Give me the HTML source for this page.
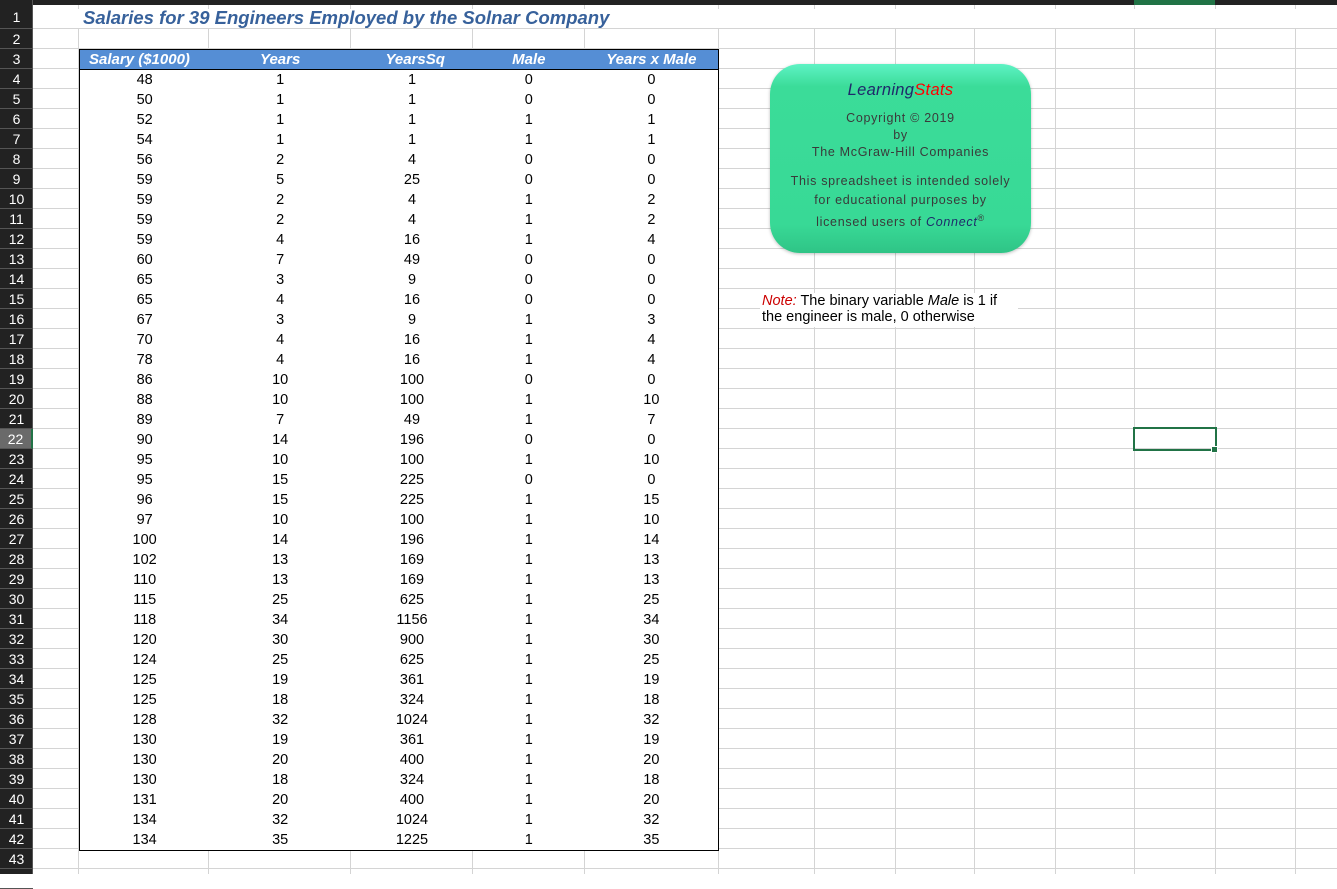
<!DOCTYPE html><html><head><style>
*{margin:0;padding:0;box-sizing:border-box}
body{width:1337px;height:874px;overflow:hidden;background:#fff;position:relative;font-family:"Liberation Sans",Arial,sans-serif}
.a{position:absolute}
.grid{left:33px;top:9px;width:1304px;height:865px;background:repeating-linear-gradient(to bottom,transparent 0,transparent 19px,#d4d4d4 19px,#d4d4d4 20px);}
.v{position:absolute;top:0;width:1px;height:874px;background:#d4d4d4}
.rh{left:0;top:0;width:33px;height:874px;background:#222;border-right:1px solid #555}
.rn{position:absolute;left:0;width:33px;height:20px;line-height:20px;text-align:center;color:#fff;font-size:14px;border-bottom:1px solid #555}
table{border-collapse:collapse;position:absolute;left:79px;top:49px;width:640px;border:1px solid #000;background:#fff;font-size:14.5px}
td{height:20px;line-height:20px;text-align:center;padding:0;color:#000}
th{height:20px;line-height:19px;background:#558ed5;color:#fff;font-style:italic;font-weight:bold;font-size:15px;border-bottom:1px solid #000;padding:0}
</style></head><body>
<div class="a grid"></div>
<div class="v" style="left:78px"></div><div class="v" style="left:208px"></div><div class="v" style="left:350px"></div><div class="v" style="left:472px"></div><div class="v" style="left:584px"></div><div class="v" style="left:718px"></div><div class="v" style="left:814px"></div><div class="v" style="left:895px"></div><div class="v" style="left:974px"></div><div class="v" style="left:1055px"></div><div class="v" style="left:1134px"></div><div class="v" style="left:1215px"></div><div class="v" style="left:1295px"></div>
<div class="a" style="left:33px;top:9px;width:1304px;height:20px;background:#fff"></div>
<div class="a" style="left:33px;top:28px;width:1304px;height:1px;background:#d4d4d4"></div>
<div class="a" style="left:0;top:0;width:1337px;height:5px;background:#222"></div>
<div class="a" style="left:1134px;top:0;width:81px;height:5px;background:#217346"></div>
<div class="a rh" id="rh"></div>
<div class="a" style="left:83px;top:7px;font-size:18.5px;font-weight:bold;font-style:italic;color:#37619b;white-space:nowrap">Salaries for 39 Engineers Employed by the Solnar Company</div>
<table>
<tr><th style="width:130px;text-align:left;padding-left:9px">Salary ($1000)</th><th style="width:142px">Years</th><th style="width:122px;text-align:right;padding-right:28px">YearsSq</th><th style="width:112px">Male</th><th style="width:134px">Years x Male</th></tr>
<tbody id="tb"></tbody></table>
<div class="a" style="left:770px;top:64px;width:261px;height:189px;border-radius:30px;background:linear-gradient(#5ef3c4 0,#3bdc99 12%,#38d996 85%,#2fc486 100%);box-shadow:0 1px 3px rgba(0,0,0,.25);text-align:center;font-size:12.5px;color:#3a3a3a;letter-spacing:.7px;white-space:nowrap">
<div style="margin-top:17px;font-size:16.5px;font-style:italic;color:#1f2a6b;letter-spacing:.3px">Learning<span style="color:#f00">Stats</span></div>
<div style="margin-top:10px;line-height:17px">Copyright © 2019<br>by<br>The McGraw-Hill Companies</div>
<div style="margin-top:11px;line-height:18.5px">This spreadsheet is intended solely<br>for educational purposes by<br>licensed users of <i style="color:#1f2a6b">Connect</i><sup style="font-size:9px">®</sup></div>
</div>
<div class="a" style="left:760px;top:293px;width:258px;height:34px;background:#fff;font-size:14.5px;line-height:16px;color:#000;padding-left:2px;white-space:nowrap"><i style="color:#c00">Note:</i> The binary variable <i>Male</i> is 1 if<br>the engineer is male, 0 otherwise</div>
<div class="a" style="left:1133px;top:427px;width:84px;height:24px;border:2px solid #217346"></div>
<div class="a" style="left:1211px;top:446px;width:7px;height:7px;background:#217346;border:1px solid #fff"></div>
<script>
var d=[[48,1,1,0,0],[50,1,1,0,0],[52,1,1,1,1],[54,1,1,1,1],[56,2,4,0,0],[59,5,25,0,0],[59,2,4,1,2],[59,2,4,1,2],[59,4,16,1,4],[60,7,49,0,0],[65,3,9,0,0],[65,4,16,0,0],[67,3,9,1,3],[70,4,16,1,4],[78,4,16,1,4],[86,10,100,0,0],[88,10,100,1,10],[89,7,49,1,7],[90,14,196,0,0],[95,10,100,1,10],[95,15,225,0,0],[96,15,225,1,15],[97,10,100,1,10],[100,14,196,1,14],[102,13,169,1,13],[110,13,169,1,13],[115,25,625,1,25],[118,34,1156,1,34],[120,30,900,1,30],[124,25,625,1,25],[125,19,361,1,19],[125,18,324,1,18],[128,32,1024,1,32],[130,19,361,1,19],[130,20,400,1,20],[130,18,324,1,18],[131,20,400,1,20],[134,32,1024,1,32],[134,35,1225,1,35]];
var h='';d.forEach(function(r){h+='<tr>'+r.map(function(x){return '<td>'+x+'</td>'}).join('')+'</tr>'});
document.getElementById('tb').innerHTML=h;
var s='';for(var i=1;i<=44;i++){var t=i==1?5:29+20*(i-2);var hh=i==1?24:20;s+='<div class="rn" style="top:'+t+'px;height:'+hh+'px;line-height:'+hh+'px;'+(i==22?'background:#6a6a6a;border-right:2px solid #217346':'')+'">'+i+'</div>'}
document.getElementById('rh').innerHTML=s;
</script>
</body></html>
